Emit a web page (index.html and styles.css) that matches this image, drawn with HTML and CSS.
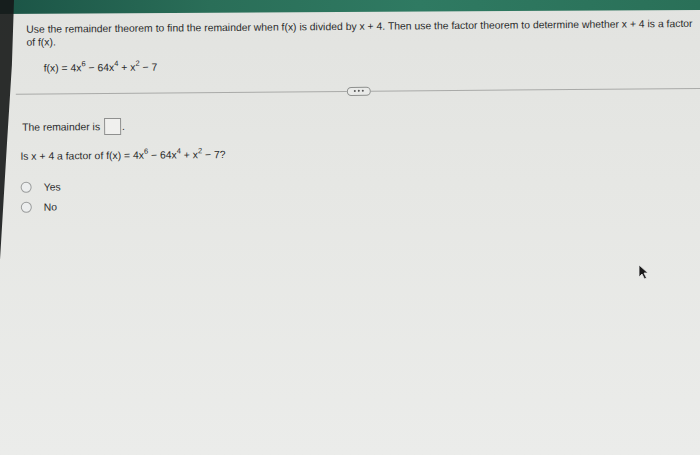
FILE: index.html
```html
<!DOCTYPE html>
<html>
<head>
<meta charset="utf-8">
<link rel="stylesheet" href="styles.css">
</head>
<body>
<div class="page">
  <div class="topbar"></div>
  <div class="edge"></div>
  <div class="sheet">
    <div class="question">
      <p class="prompt">Use the remainder theorem to find the remainder when f(x) is divided by x + 4. Then use the factor theorem to determine whether x + 4 is a factor of f(x).</p>
      <p class="formula">f(x) = 4x<sup>6</sup> − 64x<sup>4</sup> + x<sup>2</sup> − 7</p>
    </div>
    <div class="divider">
      <span class="line"></span>
      <span class="more"><i></i><i></i><i></i></span>
      <span class="line"></span>
    </div>
    <div class="answer">
      <p class="remainder">The remainder is <span class="box"></span>.</p>
      <p class="factor">Is x + 4 a factor of f(x) = 4x<sup>6</sup> − 64x<sup>4</sup> + x<sup>2</sup> − 7?</p>
      <div class="options">
        <label class="opt"><span class="radio"></span>Yes</label>
        <label class="opt"><span class="radio"></span>No</label>
      </div>
    </div>
  </div>
  <svg class="cursor" width="12" height="16" viewBox="0 0 12 16"><path d="M1 1 L1 13 L4 10 L6.5 15 L8.5 14 L6 9 L10 9 Z" fill="#1a1a1a" stroke="#e8e8e8" stroke-width="0.8"/></svg>
</div>
</body>
</html>
```
FILE: styles.css
```css
html, body {
  margin: 0;
  padding: 0;
}
body {
  width: 700px;
  height: 455px;
  overflow: hidden;
  font-family: "Liberation Sans", Arial, sans-serif;
  color: #2b2c2c;
  background: linear-gradient(180deg, #e2e3e0 0%, #e6e7e4 40%, #ebecea 100%);
}
.page {
  position: relative;
  width: 700px;
  height: 455px;
}
.topbar {
  position: absolute;
  left: 0;
  top: 0;
  width: 700px;
  height: 14px;
  background: linear-gradient(90deg, #1b5446 0%, #2a6e58 30%, #2f7a62 60%, #2a7058 100%);
  clip-path: polygon(0 0, 100% 0, 100% 10px, 0 14px);
}
.edge {
  position: absolute;
  left: 0;
  top: 0;
  width: 14px;
  height: 260px;
  background: #161818;
  clip-path: polygon(0 0, 100% 0, 85% 25%, 50% 55%, 0 100%);
  opacity: 0.9;
}
.sheet {
  transform: rotate(-0.5deg);
  transform-origin: 0 0;
}
.question {
  padding: 24px 0 0 26px;
}
p {
  margin: 0;
}
.prompt {
  font-size: 10.4px;
  line-height: 12.5px;
}
.formula {
  margin: 13px 0 0 17px;
  font-size: 10.4px;
  line-height: 14px;
}
sup {
  font-size: 7.5px;
  vertical-align: 5px;
  line-height: 0;
}
.divider {
  display: flex;
  align-items: center;
  margin: 13px 0 0 15px;
  height: 10px;
}
.line {
  flex: 1;
  height: 1px;
  background: #a9aaa8;
}
.more {
  display: flex;
  align-items: center;
  justify-content: center;
  gap: 2px;
  width: 22px;
  height: 7px;
  border: 1px solid #8e908e;
  border-radius: 5px;
  background: #e9eae8;
}
.more i {
  width: 2px;
  height: 2px;
  background: #555;
  border-radius: 50%;
}
.answer {
  padding: 20px 0 0 21px;
  font-size: 10.4px;
}
.remainder {
  display: flex;
  align-items: center;
  line-height: 16px;
}
.box {
  display: inline-block;
  width: 15px;
  height: 15px;
  border: 1px solid #8f908f;
  background: #f0f0ee;
  margin-left: 4px;
  margin-right: 1px;
}
.factor {
  margin: 14px 0 0 -2px;
  line-height: 14px;
}
.options {
  display: flex;
  flex-direction: column;
  gap: 7px;
  margin-top: 17px;
}
.opt {
  display: flex;
  align-items: center;
  gap: 12px;
  margin-left: -2px;
  line-height: 13px;
}
.radio {
  width: 9px;
  height: 9px;
  border: 1.5px solid #9a9c9c;
  border-radius: 50%;
  background: #eceeee;
}
.cursor {
  position: absolute;
  left: 638px;
  top: 264px;
}
```
